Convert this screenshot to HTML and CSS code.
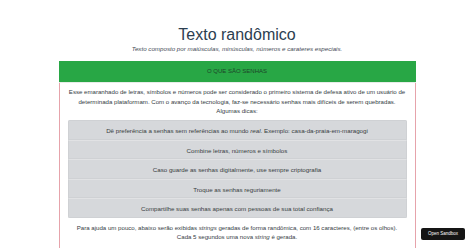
FILE: index.html
```html
<!DOCTYPE html>
<html lang="pt">
<head>
<meta charset="utf-8">
<title>Texto randômico</title>
<link rel="stylesheet" href="styles.css">
</head>
<body>
<div class="app">
  <h1 class="title">Texto randômico</h1>
  <p class="subtitle">Texto composto por maiúsculas, minúsculas, números e carateres especiais.</p>
  <div class="card">
    <div class="card-header">O que são senhas</div>
    <div class="card-body">
      <p class="text">Esse emaranhado de letras, símbolos e números pode ser considerado o primeiro sistema de defesa ativo de um usuário de determinada plataformam. Com o avanço da tecnologia, faz-se necessário senhas mais difíceis de serem quebradas.<br>Algumas dicas:</p>
      <ul class="tips">
        <li class="tip">Dê preferência a senhas sem referências ao mundo <em>real</em>. Exemplo: casa-da-praia-em-maragogi</li>
        <li class="tip">Combine letras, números e símbolos</li>
        <li class="tip">Caso guarde as senhas digitalmente, use sempre criptografia</li>
        <li class="tip">Troque as senhas reguriamente</li>
        <li class="tip">Compartilhe suas senhas apenas com pessoas de sua total confiança</li>
      </ul>
      <p class="text">Para ajuda um pouco, abaixo serão exibidas <em>strings</em> geradas de forma randômica, com 16 caracteres, (entre os olhos).<br>Cada 5 segundos uma nova <em>string</em> é gerada.</p>
    </div>
  </div>
</div>
<a class="sandbox-btn">Open Sandbox</a>
</body>
</html>
```
FILE: styles.css
```css
html, body {
  margin: 0;
  padding: 0;
  background: #ffffff;
}
body {
  font-family: "Liberation Sans", Arial, Helvetica, sans-serif;
  color: #2c3e50;
  text-align: center;
}
.app {
  padding-top: 25px;
}
.title {
  margin: 0;
  font-size: 16px;
  line-height: 20px;
  font-weight: normal;
  color: #2c3e50;
}
.subtitle {
  margin: 0;
  font-size: 6.2px;
  line-height: 8px;
  font-style: italic;
  color: #3f4a55;
}
.card {
  width: 355px;
  margin: 8px auto 0;
  border: 1px solid #e6a3ab;
  border-bottom: none;
}
.card-header {
  background: #28a745;
  height: 21px;
  line-height: 21px;
  font-size: 6px;
  text-transform: uppercase;
  color: #1d4529;
  border-bottom: 1px solid #e7ece8;
  margin: -1px -1px 0;
}
.card-body {
  padding: 4px 8px 10px;
}
.text {
  margin: 0;
  font-size: 6.1px;
  line-height: 9.5px;
  color: #353c44;
}
.tips {
  list-style: none;
  margin: 4.5px 0 5px;
  padding: 0;
  border-radius: 2px;
  overflow: hidden;
}
.tip {
  background: #d6d8db;
  color: #383d41;
  font-size: 6.2px;
  height: 19.5px;
  line-height: 19.5px;
  border: 1px solid #cfd1d4;
  border-top-color: #e1e2e4;
  box-sizing: border-box;
}
.tip:first-child {
  border-top-color: #cfd1d4;
}
.sandbox-btn {
  position: fixed;
  right: 9px;
  bottom: 8px;
  width: 44px;
  height: 12px;
  line-height: 12px;
  background: #151515;
  color: #ffffff;
  border-radius: 2px;
  font-size: 4.5px;
  text-align: center;
}
```
